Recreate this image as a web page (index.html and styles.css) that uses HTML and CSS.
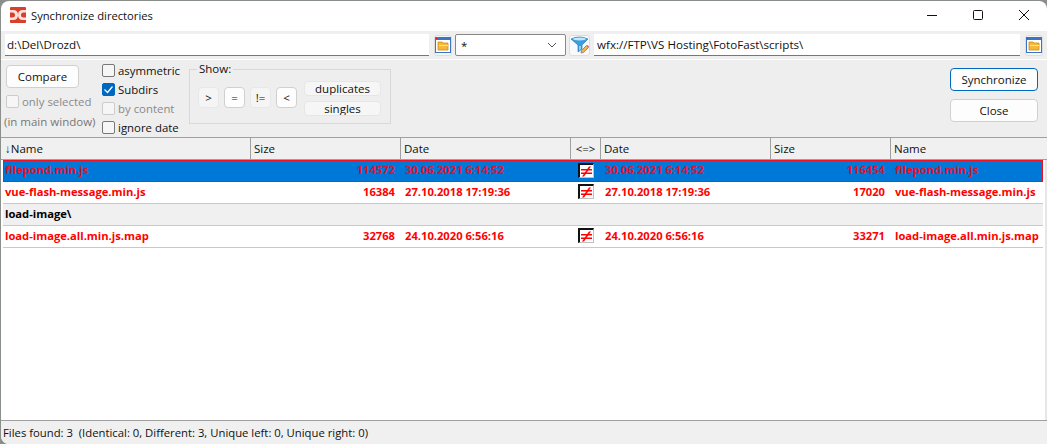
FILE: index.html
```html
<!DOCTYPE html>
<html lang="en">
<head>
    <meta charset="UTF-8">
    <title>Synchronize directories</title>
    <link rel="stylesheet" href="styles.css">
</head>
<body>
<svg class="defs" width="0" height="0">
    <symbol id="neq" viewBox="0 0 13 11">
        <path d="M1 3h11v1.500H1zM1 6.500h11V8H1z" fill="#f00"/>
        <path d="M9 0.500h2L4 10.500H2z" fill="#f00"/>
    </symbol>
    <symbol id="folder" viewBox="0 0 16 16">
        <rect x="0.500" y="0.500" width="15" height="15" fill="#fff" stroke="#3b74c4"/>
        <rect x="0" y="0" width="16" height="3" fill="#3b74c4"/>
        <rect x="1" y="1" width="1" height="1" fill="#e02020"/>
        <path d="M3 5h4l1 1h5v7H3z" fill="#f5b93a" stroke="#d08a14" stroke-width="0.800"/>
        <path d="M4 8h9v1H4z" fill="#ffe49a"/>
    </symbol>
</svg>
<div class="window">
    <header class="titlebar">
        <svg class="logo" width="16" height="16" viewBox="0 0 16 16">
            <rect width="16" height="16" rx="1" fill="#d8402c"/>
            <path d="M0 3h3q5 0 5 5t-5 5H0v-2.500h2.500q2.500 0 2.500-2.500T2.500 5.500H0z" fill="#fbe3dc"/>
            <path d="M16 3h-3q-5 0-5 5t5 5h3v-2.500h-2.500q-2.500 0-2.500-2.500t2.500-2.500H16z" fill="#fbe3dc"/>
        </svg>
        <span class="title">Synchronize directories</span>
        <div class="win-buttons">
            <svg width="12" height="12" viewBox="0 0 12 12"><path d="M1 6.500h10" stroke="#111" fill="none"/></svg>
            <svg width="12" height="12" viewBox="0 0 12 12"><rect x="1.500" y="1.500" width="9" height="9" rx="1" stroke="#111" fill="none"/></svg>
            <svg width="12" height="12" viewBox="0 0 12 12"><path d="M1 1l10 10M11 1L1 11" stroke="#111" fill="none"/></svg>
        </div>
    </header>

    <div class="pathbar">
        <div class="path path-left">d:\Del\Drozd\</div>
        <button type="button" class="icon-btn"><svg width="16" height="16"><use href="#folder"/></svg></button>
        <div class="mask">
            <span>*</span>
            <svg width="10" height="6" viewBox="0 0 10 6"><path d="M1 1l4 4 4-4" stroke="#555" fill="none"/></svg>
        </div>
        <button type="button" class="icon-btn filter-btn">
            <svg width="19" height="18" viewBox="0 0 19 18">
                <path d="M1 3q8-4 17 0l-6 6v4l-4 3V9z" fill="#3a9fe0" stroke="#2a7db8" stroke-width="0.700"/>
                <ellipse cx="9.500" cy="3" rx="6.500" ry="1.500" fill="#c4e8fa"/>
                <path d="M9 10h2v3l-2 1.500z" fill="#8fd0f2"/>
                <path d="M11.500 14.500l5-5 2 2-5 5-2.500 0.500z" fill="#eeb54c" stroke="#8a5a9c" stroke-width="0.700"/>
                <path d="M16.500 9.500l2 2 0.500-1-1.500-1.500z" fill="#c060b0"/>
            </svg>
        </button>
        <div class="path path-right">wfx://FTP\VS Hosting\FotoFast\scripts\</div>
        <button type="button" class="icon-btn"><svg width="16" height="16"><use href="#folder"/></svg></button>
    </div>

    <section class="options">
        <div class="col-compare">
            <button type="button" class="btn compare">Compare</button>
            <label class="check disabled only-selected"><i class="box"></i>only selected</label>
            <div class="note">(in main window)</div>
        </div>
        <div class="col-checks">
            <label class="check"><i class="box"></i>asymmetric</label>
            <label class="check"><i class="box checked">
                <svg width="11" height="11" viewBox="0 0 11 11"><path d="M1.500 5.500l3 3 5-6" stroke="#fff" stroke-width="1.200" fill="none"/></svg>
            </i>Subdirs</label>
            <label class="check disabled"><i class="box"></i>by content</label>
            <label class="check"><i class="box"></i>ignore date</label>
        </div>
        <fieldset class="show">
            <legend>Show:</legend>
            <div class="show-row">
                <button type="button" class="small soft">&gt;</button>
                <button type="button" class="small">=</button>
                <button type="button" class="small soft">!=</button>
                <button type="button" class="small">&lt;</button>
                <div class="show-wide">
                    <button type="button" class="wide">duplicates</button>
                    <button type="button" class="wide">singles</button>
                </div>
            </div>
        </fieldset>
        <div class="col-actions">
            <button type="button" class="btn primary">Synchronize</button>
            <button type="button" class="btn">Close</button>
        </div>
    </section>

    <section class="list">
        <div class="row head">
            <div>↓Name</div>
            <div>Size</div>
            <div>Date</div>
            <div class="c">&lt;=&gt;</div>
            <div>Date</div>
            <div>Size</div>
            <div>Name</div>
        </div>
        <div class="row file selected">
            <div>filepond.min.js</div>
            <div class="r">114572</div>
            <div>30.06.2021 6:14:52</div>
            <div class="c"><span class="neq"><svg width="13" height="11"><use href="#neq"/></svg></span></div>
            <div>30.06.2021 6:14:52</div>
            <div class="r">116454</div>
            <div>filepond.min.js</div>
        </div>
        <div class="row file">
            <div>vue-flash-message.min.js</div>
            <div class="r">16384</div>
            <div>27.10.2018 17:19:36</div>
            <div class="c"><span class="neq"><svg width="13" height="11"><use href="#neq"/></svg></span></div>
            <div>27.10.2018 17:19:36</div>
            <div class="r">17020</div>
            <div>vue-flash-message.min.js</div>
        </div>
        <div class="row dir">
            <div>load-image\</div>
        </div>
        <div class="row file">
            <div>load-image.all.min.js.map</div>
            <div class="r">32768</div>
            <div>24.10.2020 6:56:16</div>
            <div class="c"><span class="neq"><svg width="13" height="11"><use href="#neq"/></svg></span></div>
            <div>24.10.2020 6:56:16</div>
            <div class="r">33271</div>
            <div>load-image.all.min.js.map</div>
        </div>
    </section>

    <footer class="status">Files found: 3&nbsp; (Identical: 0, Different: 3, Unique left: 0, Unique right: 0)</footer>
</div>
</body>
</html>
```

FILE: styles.css
```css
html, body {
    margin: 0;
    height: 100%;
    overflow: hidden;
    background: #8a8f8c;
}
body {
    font-family: "Open Sans", "Noto Sans", sans-serif;
    font-size: 11.5px;
    color: #111;
}
button {
    font: inherit;
    color: inherit;
    padding: 0;
}
.defs {
    position: absolute;
}
.window {
    margin: 1px 0 0 1px;
    width: 1046px;
    height: 443px;
    display: flex;
    flex-direction: column;
    background: #fff;
    border-radius: 8px 8px 0 8px;
    overflow: hidden;
}

/* title */
.titlebar {
    height: 30px;
    flex: none;
    box-sizing: border-box;
    display: flex;
    align-items: center;
    padding: 0 0 2px 9px;
}
.title {
    margin-left: 5px;
    font-size: 11.2px;
}
.win-buttons {
    margin-left: auto;
    display: flex;
    gap: 34px;
    padding-right: 17px;
}

/* paths */
.pathbar {
    height: 29px;
    flex: none;
    box-sizing: border-box;
    display: flex;
    align-items: center;
    padding: 0 0 0 4px;
    background: #efefef;
    border-bottom: 1px solid #fff;
}
.path {
    height: 22px;
    box-sizing: border-box;
    font-size: 11.6px;
    line-height: 21px;
    background: #fff;
    border-bottom: 1px solid #777;
    padding-left: 2px;
}
.path-left {
    width: 424px;
}
.path-right {
    width: 426px;
    margin-left: 4px;
    padding-left: 3px;
}
.icon-btn {
    width: 18px;
    height: 21px;
    margin: 0 3px 0 5px;
    background: #f6f6f6;
    border: 1px solid #ddd;
    border-radius: 3px;
    display: flex;
    align-items: center;
    justify-content: center;
}
.filter-btn {
    width: 21px;
    margin: 0 0 0 3px;
    background: #fafafa;
}
.mask {
    width: 111px;
    height: 22px;
    box-sizing: border-box;
    display: flex;
    align-items: center;
    justify-content: space-between;
    padding: 0 8px 0 5px;
    background: #fff;
    border: 1px solid #888;
    border-radius: 2px;
}

/* options */
.options {
    height: 78px;
    flex: none;
    box-sizing: border-box;
    display: flex;
    background: #eee;
    border-bottom: 1px solid #a0a0a0;
}
.col-compare {
    width: 101px;
    flex: none;
    padding: 5px 0 0 5px;
    box-sizing: border-box;
}
.btn {
    display: block;
    width: 88px;
    height: 23px;
    box-sizing: border-box;
    background: #fdfdfd;
    border: 1px solid #d0d0d0;
    border-radius: 4px;
}
.compare {
    width: 73px;
}
.primary {
    border: 1px solid #0067c0;
}
.check {
    display: flex;
    align-items: center;
    height: 19px;
    font-size: 11.4px;
}
.box {
    width: 11px;
    height: 11px;
    flex: none;
    margin-right: 3px;
    background: #f6f6f6;
    border: 1px solid #777;
    border-radius: 2px;
    display: block;
}
.box svg {
    display: block;
}
.box.checked {
    background: #0067c0;
    border-color: #0067c0;
}
.disabled {
    color: #8a8a8a;
}
.disabled .box {
    border-color: #ccc;
}
.only-selected {
    margin-top: 4px;
}
.note {
    margin: 3px 0 0 -2px;
    color: #777;
    white-space: nowrap;
}
.col-checks {
    width: 87px;
    flex: none;
    padding-top: 1px;
    white-space: nowrap;
}
.show {
    width: 202px;
    height: 61px;
    flex: none;
    box-sizing: border-box;
    margin: 3px 0 0;
    padding: 0 0 0 8px;
    background: #eee;
    border: 1px solid #d8d8d8;
}
.show legend {
    padding: 0 2px;
    margin-left: -1px;
    line-height: 12px;
}
.show-row {
    display: flex;
    align-items: center;
    gap: 5px;
    padding-top: 3px;
}
.small {
    width: 21px;
    height: 21px;
    background: #fdfdfd;
    border: 1px solid #d0d0d0;
    border-radius: 4px;
}
.small.soft {
    background: #f5f5f5;
    border-color: #e8e8e8;
}
.show-wide {
    display: flex;
    flex-direction: column;
    gap: 5px;
    margin: 3px 0 0 2px;
}
.wide {
    width: 77px;
    height: 15px;
    line-height: 14px;
    background: #f6f6f6;
    border: 1px solid #e6e6e6;
    border-radius: 4px;
    overflow: hidden;
}
.col-actions {
    margin-left: auto;
    width: 97px;
    flex: none;
    padding-top: 8px;
    display: flex;
    flex-direction: column;
    gap: 8px;
}

/* file list */
.list {
    flex: 1;
    background: #fff;
    padding-left: 1px;
    border-right: 2px solid #e6e6e6;
}
.row {
    display: grid;
    grid-template-columns: 249px 150px 170px 30px 170px 120px 1fr;
    height: 22px;
    line-height: 20px;
    box-sizing: border-box;
    white-space: nowrap;
}
.row > div {
    padding: 0 3px;
    overflow: hidden;
}
.row .r {
    text-align: right;
    padding-right: 6px;
}
.row .c {
    text-align: center;
    padding: 0;
}
.head {
    margin: 0 -2px 0 -1px;
    padding-left: 1px;
    line-height: 21px;
    background: #f0f0f0;
    border-bottom: 1px solid #a0a0a0;
}
.head > div {
    border-right: 1px solid #a0a0a0;
}
.head > div:last-child {
    border-right: 0;
}
.file, .dir {
    grid-template-columns: 248px 150px 170px 30px 170px 120px 1fr;
    margin: 0 2px 0 1px;
    font-size: 11.2px;
    font-weight: 700;
    border-bottom: 1px solid #c8c8c8;
}
.file {
    color: #f00;
}
.file > div:first-child, .dir > div:first-child {
    padding-left: 2px;
}
.file > div + div {
    padding-left: 4px;
}
.dir {
    background: #f0f0f0;
    color: #000;
}
.selected {
    grid-template-columns: 247px 150px 170px 30px 170px 120px 1fr;
    background: #0078d7;
    color: #e01030;
    border: 1px solid #f01020;
    line-height: 18px;
}
.selected > div:first-child {
    padding-left: 1px;
}
.neq {
    display: inline-flex;
    align-items: center;
    justify-content: center;
    width: 13px;
    height: 12px;
    margin-top: 2px;
    vertical-align: top;
    background: #fff;
    border-style: solid;
    border-width: 2px 1px 1px 2px;
    border-color: #111 #c0c0c0 #c0c0c0 #111;
}

.status {
    height: 24px;
    flex: none;
    box-sizing: border-box;
    font-size: 11.3px;
    line-height: 24px;
    padding-left: 2px;
    background: #f0f0f0;
    border-top: 1px solid #a0a0a0;
}
```
